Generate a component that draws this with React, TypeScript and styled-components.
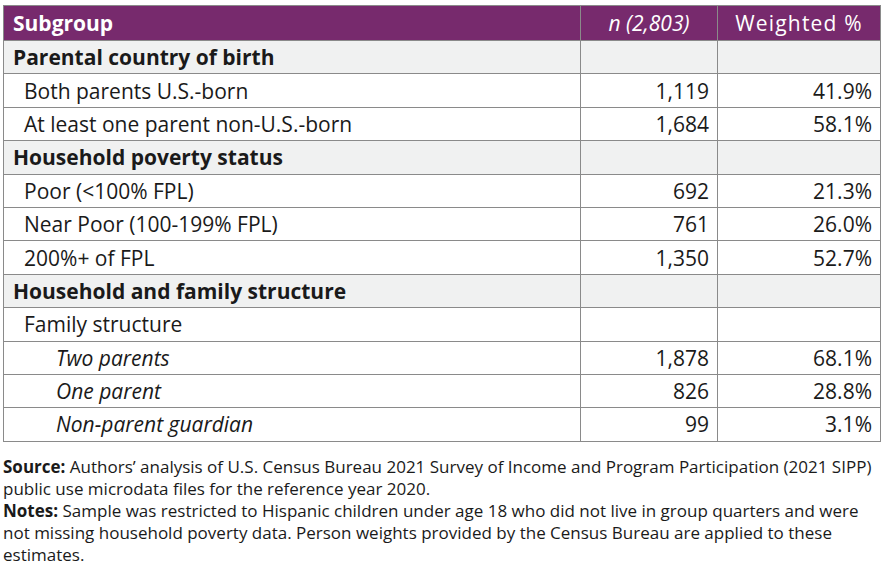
import React from "react"
import styled, { createGlobalStyle } from "styled-components"

const GlobalStyle = createGlobalStyle`
  body {
    margin: 0;
    background: #ffffff;
    font-family: "Open Sans", "Noto Sans", sans-serif;
    color: #1a1a1a;
  }
`

const Page = styled.div`
  width: 885px;
  padding: 5px 0 0 3px;
  box-sizing: border-box;
`

const Table = styled.table`
  width: 877px;
  border-collapse: collapse;
  table-layout: fixed;
  font-size: 21px;
`

const HeadCell = styled.th<{ $center?: boolean; $italic?: boolean; $wide?: boolean }>`
  background: #772a6d;
  color: #ffffff;
  height: 34px;
  border: 1px solid #8a8a8a;
  text-align: ${(p) => (p.$center ? "center" : "left")};
  font-weight: ${(p) => (p.$center ? 400 : 700)};
  font-style: ${(p) => (p.$italic ? "italic" : "normal")};
  letter-spacing: ${(p) => (p.$wide ? "1.2px" : "normal")};
  padding: ${(p) => (p.$center ? "0" : "0 0 0 9px")};
`

const Row = styled.tr<{ $section?: boolean }>`
  height: 33.4px;
  background: ${(p) => (p.$section ? "#f0f1f1" : "#ffffff")};
`

const Label = styled.td<{ $level: number; $bold?: boolean }>`
  border: 1px solid #8a8a8a;
  padding: 0 0 0 ${(p) => (p.$level === 0 ? 9 : p.$level === 1 ? 20 : 52)}px;
  font-weight: ${(p) => (p.$bold ? 700 : 400)};
  font-style: ${(p) => (p.$level === 2 ? "italic" : "normal")};
`

const Num = styled.td`
  border: 1px solid #8a8a8a;
  text-align: right;
  padding: 0 8px 0 0;
`

const Notes = styled.div`
  margin-top: 14px;
  font-size: 17px;
  line-height: 22px;
  width: 874px;
  color: #1a1a1a;
`

type RowData = {
  label: string
  level: number
  section?: boolean
  n?: string
  pct?: string
}

const rows: RowData[] = [
  { label: "Parental country of birth", level: 0, section: true },
  { label: "Both parents U.S.-born", level: 1, n: "1,119", pct: "41.9%" },
  { label: "At least one parent non-U.S.-born", level: 1, n: "1,684", pct: "58.1%" },
  { label: "Household poverty status", level: 0, section: true },
  { label: "Poor (<100% FPL)", level: 1, n: "692", pct: "21.3%" },
  { label: "Near Poor (100-199% FPL)", level: 1, n: "761", pct: "26.0%" },
  { label: "200%+ of FPL", level: 1, n: "1,350", pct: "52.7%" },
  { label: "Household and family structure", level: 0, section: true },
  { label: "Family structure", level: 1 },
  { label: "Two parents", level: 2, n: "1,878", pct: "68.1%" },
  { label: "One parent", level: 2, n: "826", pct: "28.8%" },
  { label: "Non-parent guardian", level: 2, n: "99", pct: "3.1%" },
]

export default function App() {
  return (
    <Page>
      <GlobalStyle />
      <Table>
        <colgroup>
          <col style={{ width: 577 }} />
          <col style={{ width: 137 }} />
          <col style={{ width: 163 }} />
        </colgroup>
        <thead>
          <tr>
            <HeadCell>Subgroup</HeadCell>
            <HeadCell $center $italic>
              n (2,803)
            </HeadCell>
            <HeadCell $center $wide>
              Weighted %
            </HeadCell>
          </tr>
        </thead>
        <tbody>
          {rows.map((r) => (
            <Row key={r.label} $section={r.section}>
              <Label $level={r.level} $bold={r.section}>
                {r.label}
              </Label>
              <Num>{r.n}</Num>
              <Num>{r.pct}</Num>
            </Row>
          ))}
        </tbody>
      </Table>
      <Notes>
        <b>Source:</b> Authors’ analysis of U.S. Census Bureau 2021 Survey of Income and
        Program Participation (2021 SIPP) public use microdata files for the reference year
        2020.
        <br />
        <b>Notes:</b> Sample was restricted to Hispanic children under age 18 who did not live
        in group quarters and were not missing household poverty data. Person weights provided
        by the Census Bureau are applied to these estimates.
      </Notes>
    </Page>
  )
}
